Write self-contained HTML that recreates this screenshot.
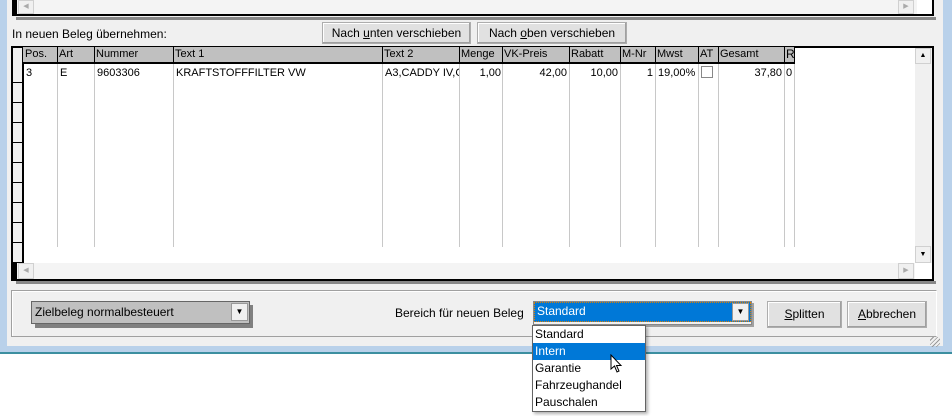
<!DOCTYPE html>
<html><head><meta charset="utf-8"><style>
*{margin:0;padding:0;box-sizing:border-box}
body{width:952px;height:416px;background:#fff;font-family:"Liberation Sans",Arial,sans-serif;font-size:11px;color:#000;position:relative;overflow:hidden}
.a{position:absolute}
.btn{position:absolute;background:#e1e1e1;border:1px solid #adadad;box-shadow:inset -1px -1px 0 #a0a0a0,inset 1px 1px 0 #fff;text-align:center;font-size:12px}
.sb{position:absolute;background:#f0f0f0;border:1px solid #d0d0d0}
.hd{position:absolute;top:0;height:16px;border-right:1px solid #000;padding-left:1px;line-height:15px}
.vl{position:absolute;top:17px;bottom:17px;border-left:1px solid #c8c8c8}
.c{position:absolute;top:19px;line-height:14px}
</style></head><body>
<!-- window -->
<div class="a" style="left:0;top:0;width:952px;height:353px;background:#b9d1ea"></div>
<div class="a" style="left:0;top:352px;width:952px;height:2px;background:#3c8fa0"></div>
<div class="a" style="left:7px;top:0;width:936px;height:346px;background:#f0f0f0"></div>
<!-- top grid remnant -->
<div class="a" style="left:12px;top:0;width:922px;height:16px;background:#fff;border-left:5px solid #000;border-right:2px solid #000;border-bottom:2px solid #000"></div>
<div class="a" style="left:17px;top:0;width:900px;height:14px;background:#f4f4f4"></div>
<div class="a" style="left:18px;top:0;width:16px;height:14px;background:#f0f0f0;border:1px solid #d0d0d0;color:#aaa;font-size:7px;line-height:12px;text-align:center">◀</div>
<div class="a" style="left:898px;top:0;width:16px;height:14px;background:#f0f0f0;border:1px solid #d0d0d0;color:#aaa;font-size:7px;line-height:12px;text-align:center">▶</div>
<div class="a" style="left:16px;top:17px;width:920px;height:3px;background:#888"></div>
<div class="a" style="left:12px;top:27px;font-size:12px">In neuen Beleg übernehmen:</div>
<div class="btn" style="left:322px;top:22px;width:149px;height:22px;line-height:20px">Nach <u>u</u>nten verschieben</div>
<div class="btn" style="left:477px;top:22px;width:150px;height:22px;line-height:20px">Nach <u>o</u>ben verschieben</div>
<!-- main grid -->
<div class="a" style="left:11px;top:46px;width:923px;height:235px;background:#fff;border:2px solid #000;border-left-width:2px"></div>
<div class="a" style="left:13px;top:48px;width:9px;height:216px;background:#f0f0f0"></div>
<div class="a" style="left:13px;top:63px;width:9px;height:200px;background:repeating-linear-gradient(#f0f0f0 0 19px,#000 19px 20px)"></div>
<div class="a" style="left:22px;top:48px;width:2px;height:216px;background:#000"></div>
<div class="a" style="left:24px;top:47px;width:892px;height:217px">
 <div class="a" style="left:-1px;top:0;width:772px;height:17px;background:#c0c0c0;border-bottom:2px solid #000"></div>
 <div class="hd" style="left:0;width:34px">Pos.</div>
 <div class="hd" style="left:34px;width:37px">Art</div>
 <div class="hd" style="left:71px;width:79px">Nummer</div>
 <div class="hd" style="left:150px;width:209px">Text 1</div>
 <div class="hd" style="left:359px;width:77px">Text 2</div>
 <div class="hd" style="left:436px;width:43px">Menge</div>
 <div class="hd" style="left:479px;width:67px">VK-Preis</div>
 <div class="hd" style="left:546px;width:51px">Rabatt</div>
 <div class="hd" style="left:597px;width:35px">M-Nr</div>
 <div class="hd" style="left:632px;width:43px">Mwst</div>
 <div class="hd" style="left:675px;width:20px">AT</div>
 <div class="hd" style="left:695px;width:66px">Gesamt</div>
 <div class="hd" style="left:761px;width:10px;font-size:12px">R</div>
 <div class="vl" style="left:33px"></div><div class="vl" style="left:70px"></div><div class="vl" style="left:149px"></div>
 <div class="vl" style="left:358px"></div><div class="vl" style="left:435px"></div><div class="vl" style="left:478px"></div>
 <div class="vl" style="left:545px"></div><div class="vl" style="left:596px"></div><div class="vl" style="left:631px"></div>
 <div class="vl" style="left:674px"></div><div class="vl" style="left:694px"></div><div class="vl" style="left:760px"></div><div class="vl" style="left:770px"></div>
 <div class="c" style="left:2px">3</div><div class="c" style="left:36px">E</div><div class="c" style="left:73px">9603306</div>
 <div class="c" style="left:152px">KRAFTSTOFFFILTER VW</div>
 <div class="c" style="left:361px;width:74px;overflow:hidden;white-space:nowrap">A3,CADDY IV,GOLF</div>
 <div class="c" style="left:436px;width:41px;text-align:right">1,00</div>
 <div class="c" style="left:479px;width:64px;text-align:right">42,00</div>
 <div class="c" style="left:546px;width:48px;text-align:right">10,00</div>
 <div class="c" style="left:597px;width:32px;text-align:right">1</div>
 <div class="c" style="left:634px">19,00%</div>
 <div class="a" style="left:677px;top:19px;width:12px;height:12px;border:1px solid #888;background:#fff"></div>
 <div class="c" style="left:695px;width:63px;text-align:right">37,80</div>
 <div class="c" style="left:762px">0</div>
</div>
<!-- vscroll -->
<div class="a" style="left:915px;top:48px;width:17px;height:215px;background:#f0f0f0"></div>
<div class="sb" style="left:915px;top:48px;width:16px;height:16px;font-size:7px;text-align:center;line-height:13px">▲</div>
<div class="sb" style="left:915px;top:246px;width:16px;height:17px;font-size:7px;text-align:center;line-height:15px">▼</div>
<!-- hscroll -->
<div class="a" style="left:13px;top:263px;width:4px;height:16px;background:#000"></div>
<div class="a" style="left:17px;top:263px;width:898px;height:16px;background:#f4f4f4"></div>
<div class="sb" style="left:18px;top:263px;width:16px;height:16px;color:#aaa;font-size:7px;text-align:center;line-height:14px">◀</div>
<div class="sb" style="left:898px;top:263px;width:16px;height:16px;color:#aaa;font-size:7px;text-align:center;line-height:14px">▶</div>
<div class="a" style="left:16px;top:281px;width:920px;height:3px;background:#888"></div>
<!-- group -->
<div class="a" style="left:11px;top:290px;width:926px;height:47px;border:1px solid #a0a0a0;border-right-color:#fff;border-bottom-color:#a0a0a0;box-shadow:inset 1px 1px 0 #fff"></div>
<div class="a" style="left:35px;top:305px;width:218px;height:23px;background:#808080"></div>
<div class="a" style="left:31px;top:301px;width:219px;height:23px;background:#c0c0c0;border:1px solid #666;font-size:12px;line-height:20px;padding-left:3px">Zielbeleg normalbesteuert</div>
<div class="a" style="left:231px;top:303px;width:17px;height:18px;background:#f0f0f0;border:1px solid #999;font-size:8px;text-align:center;line-height:16px">▼</div>
<div class="a" style="left:395px;top:306px;font-size:12px">Bereich für neuen Beleg</div>
<div class="a" style="left:533px;top:301px;width:219px;height:24px;background:#f0f0f0;border:1px solid #888;box-shadow:2px 2px 0 #a0a0a0"></div>
<div class="a" style="left:534px;top:302px;width:217px;height:20px;background:#0078d7;border:1px dotted #e08000;color:#fff;font-size:12px;line-height:17px;padding-left:2px">Standard</div>
<div class="a" style="left:732px;top:303px;width:17px;height:18px;background:#f0f0f0;border:1px solid #999;font-size:8px;text-align:center;line-height:16px">▼</div>
<div class="btn" style="left:767px;top:301px;width:75px;height:27px;line-height:25px"><u>S</u>plitten</div>
<div class="btn" style="left:847px;top:301px;width:80px;height:27px;line-height:25px"><u>A</u>bbrechen</div>
<div class="a" style="left:930px;top:337px;width:10px;height:10px;background:repeating-linear-gradient(135deg,transparent 0 2px,#999 2px 3px)"></div>
<!-- dropdown -->
<div class="a" style="left:532px;top:325px;width:114px;height:87px;background:#fff;border:1px solid #646464;box-shadow:2px 2px 3px rgba(0,0,0,.3);font-size:12px;line-height:17px">
 <div style="padding-left:2px">Standard</div>
 <div style="padding-left:2px;background:#0078d7;color:#fff">Intern</div>
 <div style="padding-left:2px">Garantie</div>
 <div style="padding-left:2px">Fahrzeughandel</div>
 <div style="padding-left:2px">Pauschalen</div>
</div>
<svg class="a" style="left:610px;top:354px" width="14" height="20"><path d="M1 1 L1 15 L4.5 12 L7 18 L9 17 L6.5 11.5 L11 11.5 Z" fill="#fff" stroke="#000" stroke-width="1"/></svg>
</body></html>
